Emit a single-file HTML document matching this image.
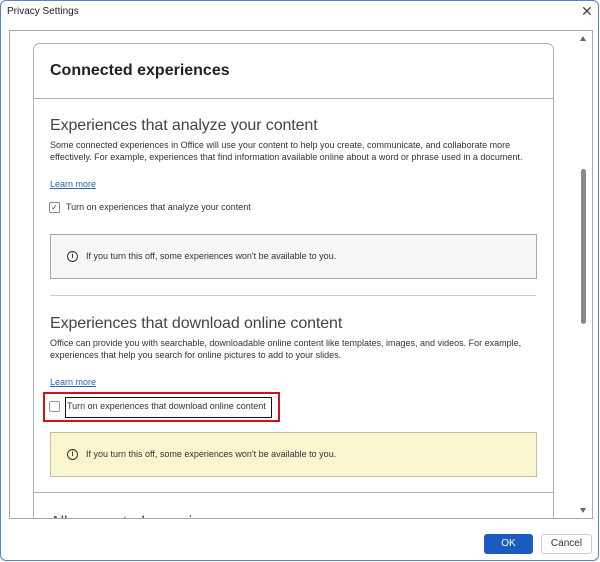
<!DOCTYPE html>
<html><head><style>
*{margin:0;padding:0;box-sizing:border-box}
body{width:600px;height:562px;background:#fff;font-family:"Liberation Sans",sans-serif;position:relative;overflow:hidden}
.win{position:absolute;left:0;top:0;width:599px;height:561px;border:1px solid #5b82c9;border-radius:6px;background:#fff}
.a{position:absolute}
.t{position:absolute;white-space:nowrap;color:#222}
.sm{font-size:9px;color:#333}
.h2{font-size:16px;font-weight:normal;color:#444;letter-spacing:-0.1px}
.link{font-size:9px;color:#2b64b8;text-decoration:underline}
</style></head><body>
<div class="win"></div>
<div class="t" style="left:7px;top:6px;font-size:10px;color:#222">Privacy Settings</div>
<div class="t" style="left:581px;top:3px;font-size:14px;color:#444">✕</div>
<div class="a" style="left:9px;top:30px;width:584px;height:489px;border:1px solid #a8a8a8;background:#fff;overflow:hidden">
  <div class="a" style="left:570px;top:5px;width:0;height:0;border-left:3px solid transparent;border-right:3px solid transparent;border-bottom:5px solid #666"></div>
  <div class="a" style="left:570px;top:477px;width:0;height:0;border-left:3px solid transparent;border-right:3px solid transparent;border-top:5px solid #666"></div>
  <div class="a" style="left:571px;top:138px;width:5px;height:155px;background:#8a8a8a;border-radius:3px"></div>
  <div class="a" style="left:23px;top:12px;width:521px;height:520px;border:1px solid #b0b0b0;border-radius:7px;background:#fff"></div>
  <div class="a" style="left:24px;top:67px;width:519px;height:1px;background:#b0b0b0"></div>
  <div class="a" style="left:24px;top:461px;width:519px;height:1px;background:#b0b0b0"></div>
  <div class="a" style="left:40px;top:264px;width:486px;height:1px;background:#c8c8c8"></div>
  <div class="t h2" style="left:40px;top:483px">All connected experiences</div>
</div>
<div class="t" style="left:50px;top:62px;font-size:16px;font-weight:bold;color:#222">Connected experiences</div>
<div class="t h2" style="left:50px;top:117px">Experiences that analyze your content</div>
<div class="t sm" style="left:50px;top:140px">Some connected experiences in Office will use your content to help you create, communicate, and collaborate more</div>
<div class="t sm" style="left:50px;top:152px">effectively. For example, experiences that find information available online about a word or phrase used in a document.</div>
<div class="t link" style="left:50px;top:179px">Learn more</div>
<div class="a" style="left:49px;top:202px;width:11px;height:11px;border:1px solid #888;border-radius:2px;font-size:8px;line-height:9px;text-align:center;color:#333">✓</div>
<div class="t sm" style="left:66px;top:202px">Turn on experiences that analyze your content</div>
<div class="a" style="left:50px;top:234px;width:487px;height:45px;border:1px solid #a8a8a8;background:#f7f7f7"></div>
<div class="a" style="left:67px;top:251px;width:11px;height:11px;border:1px solid #333;border-radius:50%;font-size:7px;line-height:9px;text-align:center;color:#333;font-weight:bold">i</div>
<div class="t sm" style="left:86px;top:251px">If you turn this off, some experiences won't be available to you.</div>
<div class="t h2" style="left:50px;top:315px">Experiences that download online content</div>
<div class="t sm" style="left:50px;top:338px">Office can provide you with searchable, downloadable online content like templates, images, and videos. For example,</div>
<div class="t sm" style="left:50px;top:350px">experiences that help you search for online pictures to add to your slides.</div>
<div class="t link" style="left:50px;top:377px">Learn more</div>
<div class="a" style="left:43px;top:392px;width:237px;height:30px;border:2px solid #d0141c"></div>
<div class="a" style="left:49px;top:401px;width:11px;height:11px;border:1px solid #999;border-radius:2px"></div>
<div class="a" style="left:65px;top:397px;width:207px;height:21px;border:1.5px solid #111"></div>
<div class="t sm" style="left:67px;top:401px">Turn on experiences that download online content</div>
<div class="a" style="left:50px;top:432px;width:487px;height:45px;border:1px solid #c4c0a0;background:#f9f5cf"></div>
<div class="a" style="left:67px;top:449px;width:11px;height:11px;border:1px solid #333;border-radius:50%;font-size:7px;line-height:9px;text-align:center;color:#333;font-weight:bold">i</div>
<div class="t sm" style="left:86px;top:449px">If you turn this off, some experiences won't be available to you.</div>
<div class="a" style="left:484px;top:534px;width:49px;height:20px;background:#1a5cbf;border-radius:3px;color:#fff;font-size:10px;line-height:20px;text-align:center">OK</div>
<div class="a" style="left:541px;top:534px;width:51px;height:20px;background:#fff;border:1px solid #ccc;border-radius:3px;color:#333;font-size:10px;line-height:18px;text-align:center">Cancel</div>
</body></html>
